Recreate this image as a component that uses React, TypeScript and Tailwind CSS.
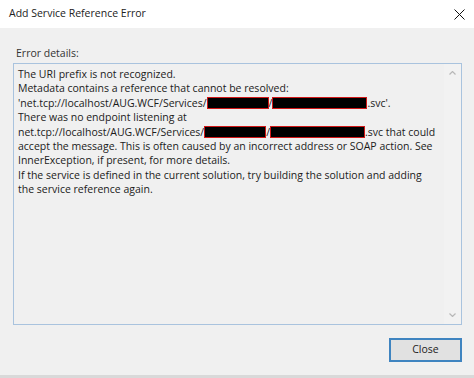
import React from 'react';

const Redacted = ({ width }: { width: number }) => (
  <span
    className="inline-block h-[12px] bg-black border border-[#d01818] align-[-2px]"
    style={{ width }}
  />
);

const CloseIcon = () => (
  <svg width="11" height="11" viewBox="0 0 11 11" fill="none" stroke="#111" strokeWidth="1">
    <path d="M0.5 0.5L10.5 10.5M10.5 0.5L0.5 10.5" />
  </svg>
);

const Chevron = ({ up }: { up?: boolean }) => (
  <svg width="7" height="4" viewBox="0 0 7 4" fill="none" stroke="#b8b8b8" strokeWidth="1.2">
    <path d={up ? 'M0.5 3.5L3.5 0.5L6.5 3.5' : 'M0.5 0.5L3.5 3.5L6.5 0.5'} />
  </svg>
);

const App: React.FC = () => {
  return (
    <div
      className="w-[474px] h-[378px] flex flex-col bg-[#f0f0f0] text-[#1b1b1b] overflow-hidden"
      style={{ fontFamily: '"Open Sans", "Noto Sans", sans-serif' }}
    >
      {/* Title bar */}
      <div className="h-[28px] bg-white flex items-center justify-between pl-[9px] pr-[9px]">
        <span className="text-[10.5px] text-[#222]">Add Service Reference Error</span>
        <CloseIcon />
      </div>

      <div className="flex-1 flex flex-col pl-[13px] pr-[12px]">
        <div className="mt-[18px] ml-[3px] text-[10.5px] leading-[14px] text-[#333]">Error details:</div>

        {/* Message box */}
        <div className="mt-[3px] h-[262px] flex border border-[#a9c3de] bg-[#f0f0f0]">
          <div className="flex-1 pl-[4px] pt-[3px] text-[10.5px] leading-[14.4px] whitespace-nowrap">
            <div>The URI prefix is not recognized.</div>
            <div>Metadata contains a reference that cannot be resolved:</div>
            <div>
              'net.tcp://localhost/AUG.WCF/Services/<Redacted width={62} />/<Redacted width={95} />.svc'.
            </div>
            <div>There was no endpoint listening at</div>
            <div>
              net.tcp://localhost/AUG.WCF/Services/<Redacted width={62} />/<Redacted width={95} />.svc that could
            </div>
            <div>accept the message. This is often caused by an incorrect address or SOAP action. See</div>
            <div>InnerException, if present, for more details.</div>
            <div>If the service is defined in the current solution, try building the solution and adding</div>
            <div>the service reference again.</div>
          </div>
          {/* Scrollbar */}
          <div className="w-[17px] flex flex-col items-center justify-between py-[7px] bg-[#f2f2f2]">
            <Chevron up />
            <Chevron />
          </div>
        </div>

        <div className="flex justify-end mt-[13px]">
          <button className="w-[73px] h-[24px] bg-[#e1e1e1] border-2 border-[#3f84c0] text-[10.5px] text-[#222]">
            Close
          </button>
        </div>
      </div>

      <div className="h-[3px] bg-[#d9d9d9]" />
    </div>
  );
};

export default App;
